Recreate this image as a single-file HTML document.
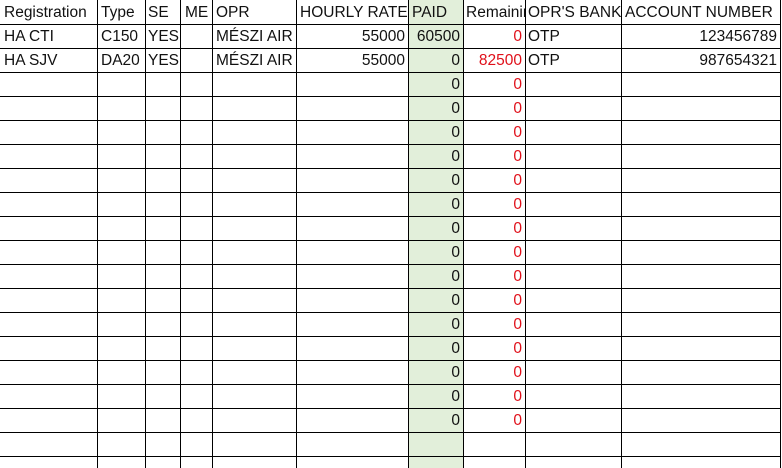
<!DOCTYPE html>
<html><head><meta charset="utf-8"><style>
body{margin:0;width:782px;height:468px;background:#fff;position:relative;overflow:hidden;font-family:"Liberation Sans",Arial,sans-serif;font-size:15.5px;color:#111}
.v{position:absolute;top:0;height:468px;width:1px;background:#000}
.h{position:absolute;left:0;width:781px;height:1px;background:#000}
.t{position:absolute;line-height:24px;white-space:nowrap}
.r{color:#e0101a}
</style></head><body>
<div style="position:absolute;left:409px;top:0;width:54px;height:468px;background:#e2efda"></div>
<div class="v" style="left:97px"></div><div class="v" style="left:145px"></div><div class="v" style="left:180px"></div><div class="v" style="left:212px"></div><div class="v" style="left:296px"></div><div class="v" style="left:408px"></div><div class="v" style="left:463px"></div><div class="v" style="left:525px"></div><div class="v" style="left:621px"></div><div class="v" style="left:780px"></div>
<div class="h" style="top:24px"></div><div class="h" style="top:48px"></div><div class="h" style="top:72px"></div><div class="h" style="top:96px"></div><div class="h" style="top:120px"></div><div class="h" style="top:144px"></div><div class="h" style="top:168px"></div><div class="h" style="top:192px"></div><div class="h" style="top:216px"></div><div class="h" style="top:240px"></div><div class="h" style="top:264px"></div><div class="h" style="top:288px"></div><div class="h" style="top:312px"></div><div class="h" style="top:336px"></div><div class="h" style="top:360px"></div><div class="h" style="top:384px"></div><div class="h" style="top:408px"></div><div class="h" style="top:432px"></div><div class="h" style="top:456px"></div>

<div class="t" style="top:1px;left:4px">Registration</div>
<div class="t" style="top:1px;left:101px">Type</div>
<div class="t" style="top:1px;left:148px">SE</div>
<div class="t" style="top:1px;left:185px">ME</div>
<div class="t" style="top:1px;left:216px">OPR</div>
<div class="t" style="top:1px;left:300px">HOURLY RATE</div>
<div class="t" style="top:1px;left:412px">PAID</div>
<div class="t" style="top:1px;left:466px;width:59px;overflow:hidden">Remaining</div>
<div class="t" style="top:1px;left:528px">OPR'S BANK</div>
<div class="t" style="top:1px;left:625px">ACCOUNT NUMBER</div>

<div class="t" style="top:25px;left:4px">HA CTI</div>
<div class="t" style="top:25px;left:101px">C150</div>
<div class="t" style="top:25px;left:148px">YES</div>
<div class="t" style="top:25px;left:216px">MÉSZI AIR</div>
<div class="t" style="top:25px;right:377px">55000</div>
<div class="t" style="top:25px;right:322px">60500</div>
<div class="t r" style="top:25px;right:260px">0</div>
<div class="t" style="top:25px;left:528px">OTP</div>
<div class="t" style="top:25px;right:5px">123456789</div>

<div class="t" style="top:49px;left:4px">HA SJV</div>
<div class="t" style="top:49px;left:101px">DA20</div>
<div class="t" style="top:49px;left:148px">YES</div>
<div class="t" style="top:49px;left:216px">MÉSZI AIR</div>
<div class="t" style="top:49px;right:377px">55000</div>
<div class="t" style="top:49px;right:322px">0</div>
<div class="t r" style="top:49px;right:260px">82500</div>
<div class="t" style="top:49px;left:528px">OTP</div>
<div class="t" style="top:49px;right:5px">987654321</div>

<div class="t" style="top:73px;right:322px">0</div><div class="t r" style="top:73px;right:260px">0</div>
<div class="t" style="top:97px;right:322px">0</div><div class="t r" style="top:97px;right:260px">0</div>
<div class="t" style="top:121px;right:322px">0</div><div class="t r" style="top:121px;right:260px">0</div>
<div class="t" style="top:145px;right:322px">0</div><div class="t r" style="top:145px;right:260px">0</div>
<div class="t" style="top:169px;right:322px">0</div><div class="t r" style="top:169px;right:260px">0</div>
<div class="t" style="top:193px;right:322px">0</div><div class="t r" style="top:193px;right:260px">0</div>
<div class="t" style="top:217px;right:322px">0</div><div class="t r" style="top:217px;right:260px">0</div>
<div class="t" style="top:241px;right:322px">0</div><div class="t r" style="top:241px;right:260px">0</div>
<div class="t" style="top:265px;right:322px">0</div><div class="t r" style="top:265px;right:260px">0</div>
<div class="t" style="top:289px;right:322px">0</div><div class="t r" style="top:289px;right:260px">0</div>
<div class="t" style="top:313px;right:322px">0</div><div class="t r" style="top:313px;right:260px">0</div>
<div class="t" style="top:337px;right:322px">0</div><div class="t r" style="top:337px;right:260px">0</div>
<div class="t" style="top:361px;right:322px">0</div><div class="t r" style="top:361px;right:260px">0</div>
<div class="t" style="top:385px;right:322px">0</div><div class="t r" style="top:385px;right:260px">0</div>
<div class="t" style="top:409px;right:322px">0</div><div class="t r" style="top:409px;right:260px">0</div>
</body></html>
